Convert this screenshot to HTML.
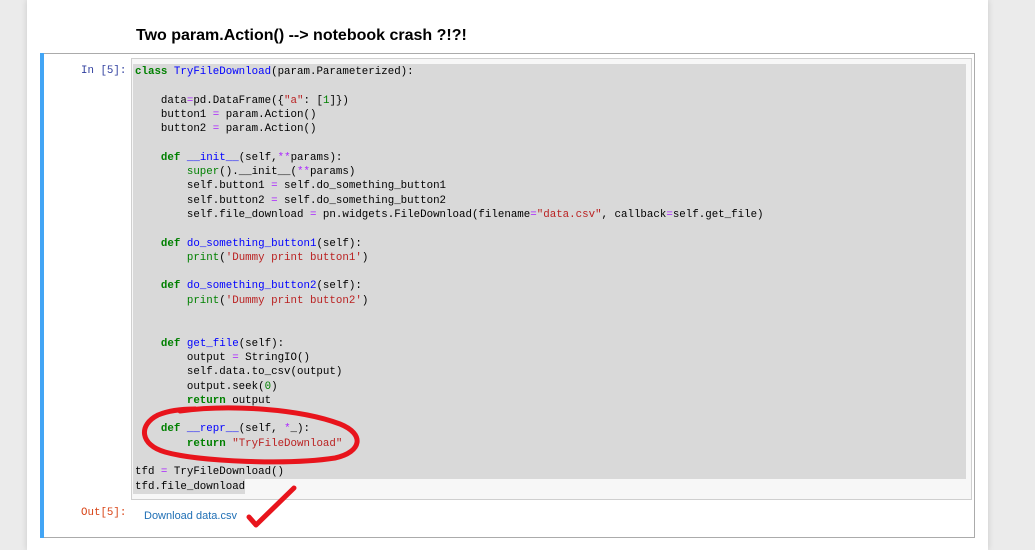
<!DOCTYPE html>
<html><head><meta charset="utf-8"><style>
html,body{margin:0;padding:0;width:1035px;height:550px;overflow:hidden;background:#ebebeb;font-family:"Liberation Sans",sans-serif}
#page{position:absolute;left:27px;top:0;width:961px;height:550px;background:#fff;box-shadow:0 0 6px rgba(0,0,0,.15)}
h1{position:absolute;left:136px;top:27px;margin:0;font-size:16px;font-weight:bold;color:#000}
#cell{position:absolute;left:40px;top:53px;width:934px;height:483px;border:1px solid #ababab;border-left:none;}
#bar{position:absolute;left:40px;top:53px;width:4px;height:485px;background:#42a5f5}
#inbox{position:absolute;left:131px;top:58px;width:839px;height:440px;border:1px solid #cfcfcf;background:#f7f7f7}
.p{position:absolute;font-family:"Liberation Mono",monospace;font-size:10.8px}
#code{position:absolute;left:135px;top:65px;font-family:"Liberation Mono",monospace;font-size:10.8px;line-height:14.3px;color:#000;white-space:pre}
#hl{position:absolute;left:133px;top:64px;width:833px;height:415px;background:#d9d9d9}
#hl2{position:absolute;left:133px;top:479px;width:112px;height:15px;background:#d9d9d9}
.k{color:#008000;font-weight:bold}.f{color:#0000ff}.s{color:#ba2121}.o{color:#aa22ff}.n{color:#008000}.b{color:#008000}
</style></head><body>
<div id="page"></div>
<h1>Two param.Action() --&gt; notebook crash ?!?!</h1>
<div id="cell"></div><div id="bar"></div>
<div id="inbox"></div>
<div id="hl"></div><div id="hl2"></div>
<div class="p" style="left:81px;top:65px;color:#303f9f">In [5]:</div>
<div class="p" style="left:81px;top:507px;color:#d84315">Out[5]:</div>
<div id="code"><span class="k">class</span> <span class="f">TryFileDownload</span>(param.Parameterized):

    data<span class="o">=</span>pd.DataFrame({<span class="s">"a"</span>: [<span class="n">1</span>]})
    button1 <span class="o">=</span> param.Action()
    button2 <span class="o">=</span> param.Action()

    <span class="k">def</span> <span class="f">__init__</span>(self,<span class="o">**</span>params):
        <span class="b">super</span>().__init__(<span class="o">**</span>params)
        self.button1 <span class="o">=</span> self.do_something_button1
        self.button2 <span class="o">=</span> self.do_something_button2
        self.file_download <span class="o">=</span> pn.widgets.FileDownload(filename<span class="o">=</span><span class="s">"data.csv"</span>, callback<span class="o">=</span>self.get_file)

    <span class="k">def</span> <span class="f">do_something_button1</span>(self):
        <span class="b">print</span>(<span class="s">'Dummy print button1'</span>)

    <span class="k">def</span> <span class="f">do_something_button2</span>(self):
        <span class="b">print</span>(<span class="s">'Dummy print button2'</span>)


    <span class="k">def</span> <span class="f">get_file</span>(self):
        output <span class="o">=</span> StringIO()
        self.data.to_csv(output)
        output.seek(<span class="n">0</span>)
        <span class="k">return</span> output

    <span class="k">def</span> <span class="f">__repr__</span>(self, <span class="o">*</span>_):
        <span class="k">return</span> <span class="s">"TryFileDownload"</span>

tfd <span class="o">=</span> TryFileDownload()
tfd.file_download</div>
<div style="position:absolute;left:144px;top:510px;font-size:11px;color:#1f6fb5">Download data.csv</div>
<svg style="position:absolute;left:0;top:0" width="1035" height="550">
<path d="M180 411 C230 404 300 409 340 424 C365 434 362 452 335 458 C290 465 200 462 165 452 C140 445 138 425 158 415 C170 410 185 409 195 409" fill="none" stroke="#e8141c" stroke-width="5" stroke-linecap="round"/>
<path d="M249 517 L256 525 L294 488" fill="none" stroke="#e8141c" stroke-width="5" stroke-linecap="round" stroke-linejoin="round"/>
</svg>
</body></html>
